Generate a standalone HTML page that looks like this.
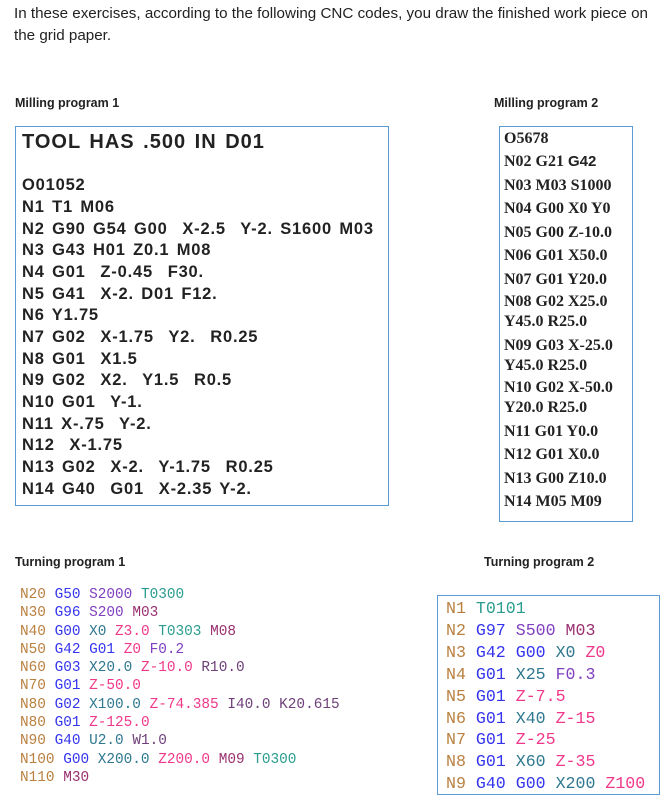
<!DOCTYPE html>
<html><head><style>
body{margin:0;width:667px;height:802px;background:#fff;position:relative;font-family:"Liberation Sans",sans-serif;color:#222;overflow:hidden}
.a{position:absolute}
.h{font-size:12.5px;font-weight:bold}
#b1{left:15px;top:126px;width:374px;height:380px;border:1px solid #5b9bd5;box-sizing:border-box;font-weight:bold;font-size:16.5px;letter-spacing:0.8px;word-spacing:2px;color:#222}
#b1 div{position:absolute;left:6px;white-space:pre}
#b2{left:499px;top:126px;width:134px;height:396px;border:1px solid #5b9bd5;box-sizing:border-box;font-family:"Liberation Serif",serif;font-weight:bold;font-size:16px;color:#222}
#b2 div{position:absolute;left:4px;white-space:nowrap}
.m{font-family:"Liberation Mono","DejaVu Sans Mono",monospace}
#t1{left:20px;top:586px;font-size:14.4px;line-height:18.3px;white-space:pre}
#b3{left:437px;top:595px;width:223px;height:200px;border:1px solid #5b9bd5;box-sizing:border-box}
#t2{left:8px;top:2px;font-size:16.6px;line-height:21.9px;white-space:pre}
.n{color:#b98040}.g{color:#3434ee}.s{color:#8040c0}.t{color:#2a9d8f}.mm{color:#9a3070}.x{color:#2f7890}.z{color:#f0388a}.r{color:#70407a}
</style></head><body>
<div class="a" style="left:14px;top:3px;font-size:15.2px;line-height:21.5px;white-space:nowrap">In these exercises, according to the following CNC codes, you draw the finished work piece on<br>the grid paper.</div>
<div class="a h" style="left:15px;top:96px">Milling program 1</div>
<div class="a h" style="left:494px;top:96px">Milling program 2</div>
<div id="b1" class="a">
<div style="top:4px;font-size:20px;letter-spacing:1px">TOOL HAS .500 IN D01</div>
<div style="top:49px">O01052</div>
<div style="top:71px">N1 T1 M06</div>
<div style="top:93px">N2 G90 G54 G00  X-2.5  Y-2. S1600 M03</div>
<div style="top:114px">N3 G43 H01 Z0.1 M08</div>
<div style="top:136px">N4 G01  Z-0.45  F30.</div>
<div style="top:158px">N5 G41  X-2. D01 F12.</div>
<div style="top:179px">N6 Y1.75</div>
<div style="top:201px">N7 G02  X-1.75  Y2.  R0.25</div>
<div style="top:223px">N8 G01  X1.5</div>
<div style="top:244px">N9 G02  X2.  Y1.5  R0.5</div>
<div style="top:266px">N10 G01  Y-1.</div>
<div style="top:288px">N11 X-.75  Y-2.</div>
<div style="top:309px">N12  X-1.75</div>
<div style="top:331px">N13 G02  X-2.  Y-1.75  R0.25</div>
<div style="top:353px">N14 G40  G01  X-2.35 Y-2.</div>
</div>
<div id="b2" class="a">
<div style="top:3px">O5678</div>
<div style="top:26px">N02 G21 <span style="font-family:'Liberation Sans',sans-serif;font-size:15px">G42</span></div>
<div style="top:50px">N03 M03 S1000</div>
<div style="top:73px">N04 G00 X0 Y0</div>
<div style="top:97px">N05 G00 Z-10.0</div>
<div style="top:120px">N06 G01 X50.0</div>
<div style="top:144px">N07 G01 Y20.0</div>
<div style="top:166px">N08 G02 X25.0</div>
<div style="top:186px">Y45.0 R25.0</div>
<div style="top:210px">N09 G03 X-25.0</div>
<div style="top:230px">Y45.0 R25.0</div>
<div style="top:252px">N10 G02 X-50.0</div>
<div style="top:272px">Y20.0 R25.0</div>
<div style="top:296px">N11 G01 Y0.0</div>
<div style="top:319px">N12 G01 X0.0</div>
<div style="top:343px">N13 G00 Z10.0</div>
<div style="top:366px">N14 M05 M09</div>
</div>
<div class="a h" style="left:15px;top:555px">Turning program 1</div>
<div class="a h" style="left:484px;top:555px">Turning program 2</div>
<div id="t1" class="a m"><span class="n">N20</span> <span class="g">G50</span> <span class="s">S2000</span> <span class="t">T0300</span>
<span class="n">N30</span> <span class="g">G96</span> <span class="s">S200</span> <span class="mm">M03</span>
<span class="n">N40</span> <span class="g">G00</span> <span class="x">X0</span> <span class="z">Z3.0</span> <span class="t">T0303</span> <span class="mm">M08</span>
<span class="n">N50</span> <span class="g">G42</span> <span class="g">G01</span> <span class="z">Z0</span> <span class="s">F0.2</span>
<span class="n">N60</span> <span class="g">G03</span> <span class="x">X20.0</span> <span class="z">Z-10.0</span> <span class="r">R10.0</span>
<span class="n">N70</span> <span class="g">G01</span> <span class="z">Z-50.0</span>
<span class="n">N80</span> <span class="g">G02</span> <span class="x">X100.0</span> <span class="z">Z-74.385</span> <span class="r">I40.0</span> <span class="r">K20.615</span>
<span class="n">N80</span> <span class="g">G01</span> <span class="z">Z-125.0</span>
<span class="n">N90</span> <span class="g">G40</span> <span class="x">U2.0</span> <span class="r">W1.0</span>
<span class="n">N100</span> <span class="g">G00</span> <span class="x">X200.0</span> <span class="z">Z200.0</span> <span class="mm">M09</span> <span class="t">T0300</span>
<span class="n">N110</span> <span class="mm">M30</span></div>
<div id="b3" class="a"><div id="t2" class="a m"><span class="n">N1</span> <span class="t">T0101</span>
<span class="n">N2</span> <span class="g">G97</span> <span class="s">S500</span> <span class="mm">M03</span>
<span class="n">N3</span> <span class="g">G42</span> <span class="g">G00</span> <span class="x">X0</span> <span class="z">Z0</span>
<span class="n">N4</span> <span class="g">G01</span> <span class="x">X25</span> <span class="s">F0.3</span>
<span class="n">N5</span> <span class="g">G01</span> <span class="z">Z-7.5</span>
<span class="n">N6</span> <span class="g">G01</span> <span class="x">X40</span> <span class="z">Z-15</span>
<span class="n">N7</span> <span class="g">G01</span> <span class="z">Z-25</span>
<span class="n">N8</span> <span class="g">G01</span> <span class="x">X60</span> <span class="z">Z-35</span>
<span class="n">N9</span> <span class="g">G40</span> <span class="g">G00</span> <span class="x">X200</span> <span class="z">Z100</span></div></div>
</body></html>
